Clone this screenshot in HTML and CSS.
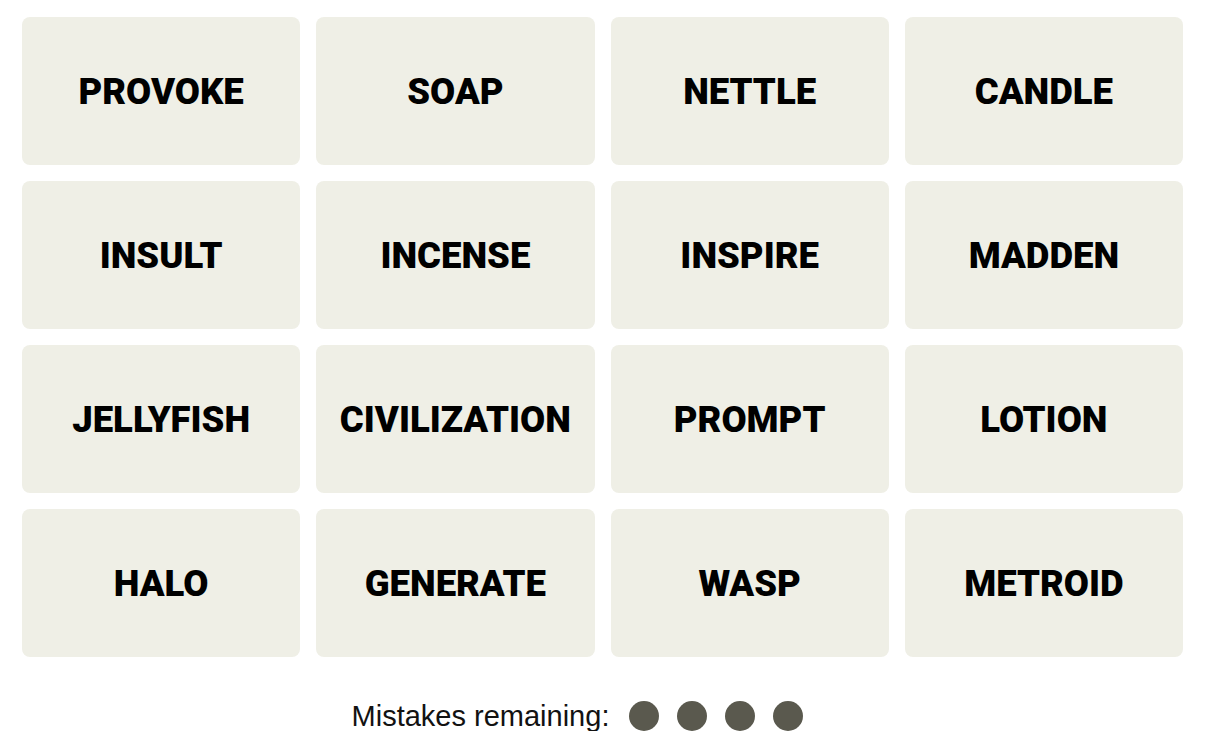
FILE: index.html
```html
<!DOCTYPE html>
<html>
<head>
<meta charset="utf-8">
<link rel="stylesheet" href="styles.css">
</head>
<body>
<main class="game">
  <div class="board">
    <div class="tile">PROVOKE</div>
    <div class="tile">SOAP</div>
    <div class="tile">NETTLE</div>
    <div class="tile">CANDLE</div>
    <div class="tile">INSULT</div>
    <div class="tile">INCENSE</div>
    <div class="tile">INSPIRE</div>
    <div class="tile">MADDEN</div>
    <div class="tile">JELLYFISH</div>
    <div class="tile">CIVILIZATION</div>
    <div class="tile">PROMPT</div>
    <div class="tile">LOTION</div>
    <div class="tile">HALO</div>
    <div class="tile">GENERATE</div>
    <div class="tile">WASP</div>
    <div class="tile">METROID</div>
  </div>
  <div class="mistakes">
    <span class="label">Mistakes remaining:</span>
    <span class="dots">
      <span class="dot"></span><span class="dot"></span><span class="dot"></span><span class="dot"></span>
    </span>
  </div>
</main>
</body>
</html>
```

FILE: styles.css
```css
html, body {
  margin: 0;
  padding: 0;
  background: #ffffff;
}
.game {
  width: 1161px;
  padding: 17px 0 0 22px;
}
.board {
  display: grid;
  grid-template-columns: repeat(4, 1fr);
  grid-auto-rows: 148px;
  gap: 16px;
}
.tile {
  background: #efefe6;
  border-radius: 8px;
  display: flex;
  align-items: center;
  justify-content: center;
  font-family: Roboto, "Liberation Sans", sans-serif;
  font-weight: 900;
  font-size: 36.5px;
  color: #000;
  letter-spacing: 0;
}
.mistakes {
  display: flex;
  align-items: center;
  justify-content: center;
  gap: 20px;
  margin-top: 44px;
  padding-right: 50px;
  height: 30px;
}
.label {
  font-family: "Liberation Sans", Arial, sans-serif;
  font-size: 29px;
  color: #121212;
}
.dots {
  display: flex;
  gap: 18px;
}
.dot {
  width: 30px;
  height: 30px;
  border-radius: 50%;
  background: #5a594e;
}
```
